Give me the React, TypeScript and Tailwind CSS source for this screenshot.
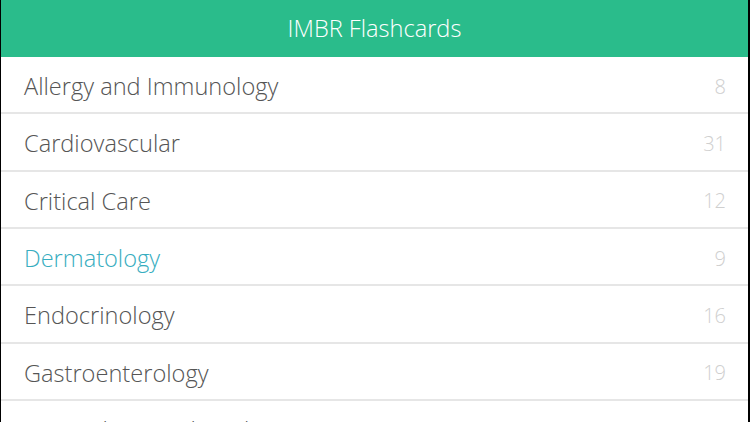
import React from "react";

const categories = [
  { name: "Allergy and Immunology", count: 8 },
  { name: "Cardiovascular", count: 31 },
  { name: "Critical Care", count: 12 },
  { name: "Dermatology", count: 9, active: true },
  { name: "Endocrinology", count: 16 },
  { name: "Gastroenterology", count: 19 },
  { name: "General Internal Medicine", count: 20 },
];

export default function App() {
  return (
    <div className="h-[422px] w-[750px] overflow-hidden bg-black pl-px pr-[2px] font-['Open_Sans',sans-serif]">
      <div className="h-full bg-white">
        <div className="flex h-[57px] items-center justify-center bg-[#2abc8b]">
          <h1 className="text-[23.6px] font-light text-white">IMBR Flashcards</h1>
        </div>
        <ul>
          {categories.map((c) => (
            <li
              key={c.name}
              className="flex h-[57.33px] items-center justify-between border-b-2 border-[#e6e6e6] pl-[23px] pr-[22px] pt-[4px]"
            >
              <span
                className={
                  c.active
                    ? "text-[23.6px] font-light text-[#37adc0]"
                    : "text-[23.6px] font-light text-[#555555]"
                }
              >
                {c.name}
              </span>
              <span className="text-[20px] font-light text-[#cfcfcf]">{c.count}</span>
            </li>
          ))}
        </ul>
      </div>
    </div>
  );
}
